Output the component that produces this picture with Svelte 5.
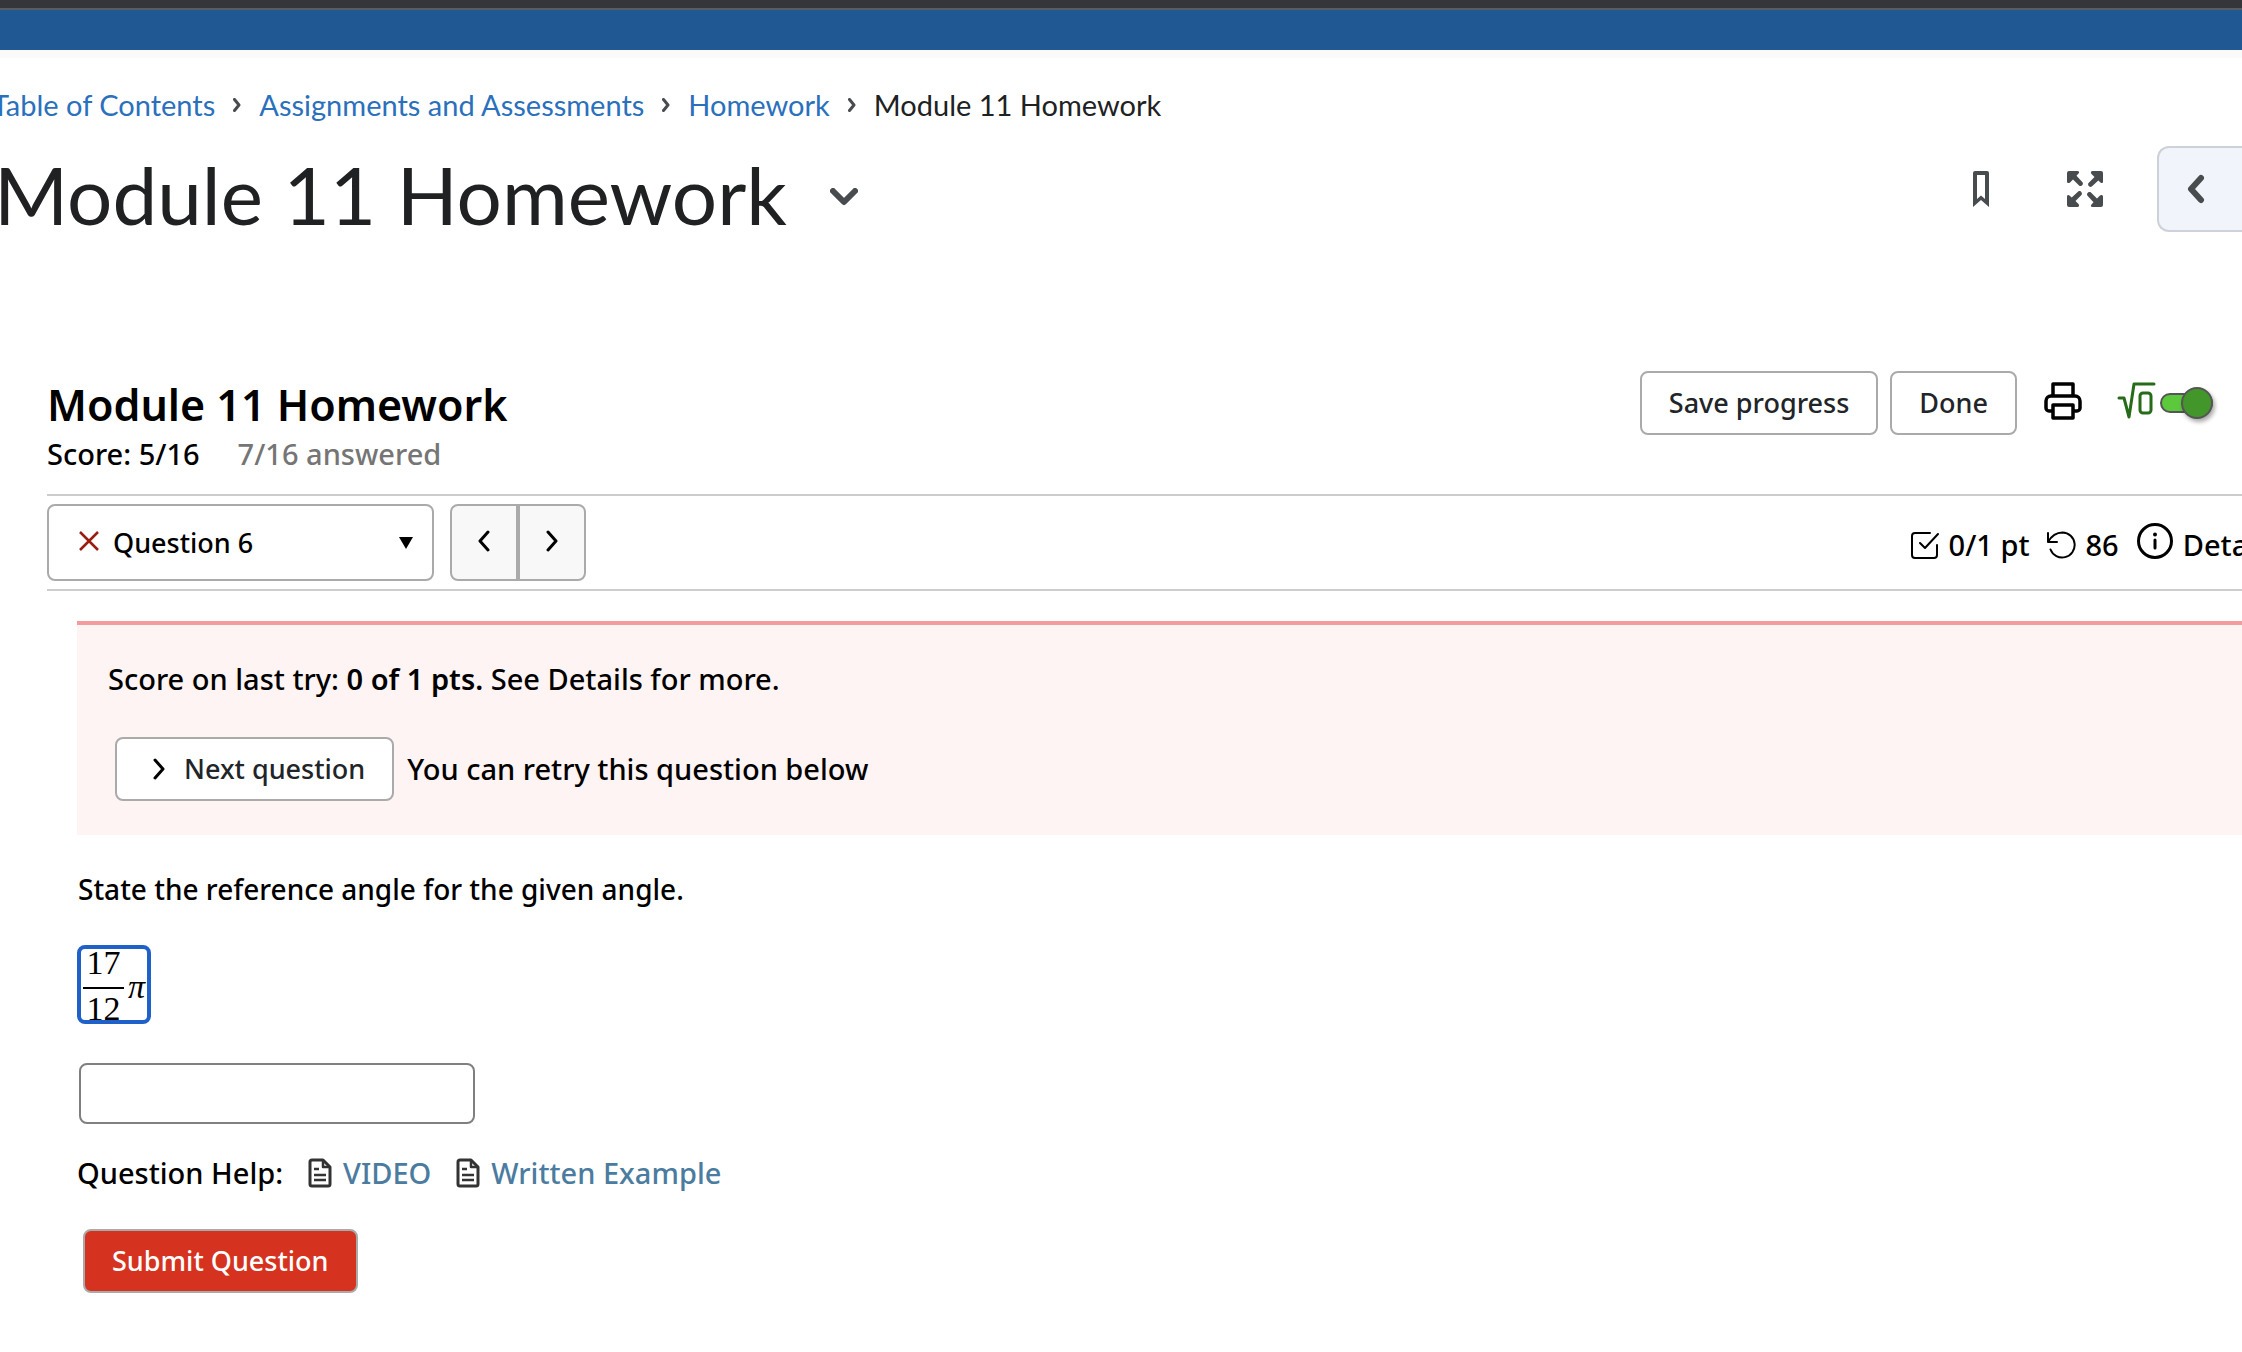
<script>
  const crumbs = ['Table of Contents', 'Assignments and Assessments', 'Homework'];
  const resources = ['VIDEO', 'Written Example'];
  let question = $state('Question 6');
  let answer = $state('');
  let mathEntry = $state(true);
</script>

{#snippet chevron(dir)}
  <svg class="chev" width="14" height="22" viewBox="0 0 14 22" aria-hidden="true">
    <path d={dir === 'left' ? 'M11 2 3 11l8 9' : 'M3 2 11 11l-8 9'} />
  </svg>
{/snippet}

<div class="page">
  <div class="window-edge"></div>
  <div class="brand-bar"></div>

  <header class="course">
    <nav class="crumbs" aria-label="Breadcrumb">
      {#each crumbs as crumb}
        <a href="#top">{crumb}</a>
        <svg width="8" height="14" viewBox="0 0 8 14" aria-hidden="true"><path d="M1.500 1.500 6 7l-4.500 5.500" /></svg>
      {/each}
      <span>Module 11 Homework</span>
    </nav>
    <div class="title-row">
      <h1>Module 11 Homework</h1>
      <button class="plain topic" aria-label="Topic actions">
        <svg width="28" height="18" viewBox="0 0 28 18"><path class="thick" d="M3 3 14 14 25 3" /></svg>
      </button>
      <div class="tools">
        <button class="plain" aria-label="Bookmark">
          <svg width="16" height="36" viewBox="0 0 16 36"><path fill="#494c4e" fill-rule="evenodd" d="M2 0h12a2 2 0 0 1 2 2v34l-8-7-8 7V2a2 2 0 0 1 2-2Zm2 4v24l4-3.500 4 3.500V4Z" /></svg>
        </button>
        <button class="plain" aria-label="Full screen">
          <svg width="36" height="36" viewBox="0 0 36 36">
            {#each [0, 90, 180, 270] as angle}
              <g transform="rotate({angle} 18 18)">
                <path fill="#494c4e" d="M2 0h8.500c1.800 0 2 1.500 1 2.500L9.500 4.700l6 6.500c1.500 2-1 4.500-3.200 3.500L6 8.500 3 11.500C1.800 12.700 0 12 0 10.500V2a2 2 0 0 1 2-2Z" />
              </g>
            {/each}
          </svg>
        </button>
        <button class="panel" aria-label="Open side panel">
          <svg width="18" height="30" viewBox="0 0 18 30"><path class="thick" d="M14 4 4 15 14 26" /></svg>
        </button>
      </div>
    </div>
  </header>

  <main>
    <div class="heading">
      <div>
        <h2>Module 11 Homework</h2>
        <p class="score"><span>Score: 5/16</span><span class="muted">7/16 answered</span></p>
      </div>
      <div class="actions">
        <button class="btn">Save progress</button>
        <button class="btn">Done</button>
        <button class="plain print" aria-label="Print">
          <svg width="38" height="38" viewBox="0 0 38 38" fill="none" stroke="#000" stroke-width="3.500" stroke-linejoin="round">
            <path d="M9 14V2h20v12M9 29H5a3 3 0 0 1-3-3v-7a5 5 0 0 1 5-5h24a5 5 0 0 1 5 5v7a3 3 0 0 1-3 3h-4M9 23h20v13H9Z" />
          </svg>
        </button>
        <label class="switch">
          <svg width="39" height="38" viewBox="0 0 39 38" fill="none" stroke="#256b18" stroke-width="3" stroke-linecap="round" stroke-linejoin="round" aria-hidden="true">
            <path d="M2 16h5l5 19 5-33h20" /><rect x="23" y="11" width="11" height="20" rx="3" />
          </svg>
          <input type="checkbox" aria-label="Equation editor" bind:checked={mathEntry} />
          <span class="track"><span class="knob"></span></span>
        </label>
      </div>
    </div>

    <div class="question-bar">
      <div class="picker">
        <svg width="20" height="20" viewBox="0 0 20 20" aria-hidden="true"><path d="m1 1 18 18M19 1 1 19" stroke="#9b1c10" stroke-width="2.500" /></svg>
        <select aria-label="Question" bind:value={question}>
          <option>Question 6</option>
        </select>
        <svg class="caret" width="16" height="12" viewBox="0 0 16 12" aria-hidden="true"><path d="M1 0h14L8 12Z" /></svg>
      </div>
      <div class="pager">
        <button aria-label="Previous question">{@render chevron('left')}</button>
        <button aria-label="Next question">{@render chevron('right')}</button>
      </div>
      <div class="status">
        <svg width="28" height="28" viewBox="0 0 28 28" class="line" aria-hidden="true"><path d="M19 2H4a3 3 0 0 0-3 3v19a3 3 0 0 0 3 3h19a3 3 0 0 0 3-3V14M9 12l5 5L27 3" /></svg>
        <span class="points">0/1 pt</span>
        <svg width="30" height="28" viewBox="0 0 30 28" class="line" aria-hidden="true"><path d="M2 2v9h9M2 11C6 4 11 1.500 16.500 1.500a12.500 12.500 0 1 1-12 17" /></svg>
        <span class="tries">86</span>
        <svg class="info" width="36" height="36" viewBox="0 0 36 36" aria-hidden="true"><circle cx="18" cy="18" r="16.500" fill="none" stroke="#000" stroke-width="3" /><path d="M18 17v8" stroke="#000" stroke-width="3" stroke-linecap="round" /><circle cx="18" cy="11.500" r="2" /></svg>
        <a class="details" href="#details">Details</a>
      </div>
    </div>

    <section class="question">
      <div class="feedback">
        <p>Score on last try: <strong>0 of 1 pts.</strong> See Details for more.</p>
        <div class="retry">
          <button class="btn next">{@render chevron('right')}Next question</button>
          <span>You can retry this question below</span>
        </div>
      </div>

      <p class="prompt">State the reference angle for the given angle.</p>
      <div class="math" role="math" aria-label="17 twelfths pi">
        <span class="frac"><span class="num">17</span><span class="den">12</span></span><i>π</i>
      </div>
      <input class="answer" type="text" aria-label="Answer" bind:value={answer} />

      <p class="help">
        <span>Question Help:</span>
        {#each resources as name}
          <a href="#help">
            <svg width="24" height="30" viewBox="0 0 24 30" fill="none" stroke="#333" stroke-width="3" stroke-linejoin="round" aria-hidden="true"><path d="M4 2h11l7 7v17a2 2 0 0 1-2 2H4a2 2 0 0 1-2-2V4a2 2 0 0 1 2-2Z" /><path d="M15 2v7h7M6 11h5M6 17h12M6 22h12" stroke-width="2.500" /></svg>
            {name}
          </a>
        {/each}
      </p>
      <button class="btn submit">Submit Question</button>
    </section>
  </main>
</div>

<style>
  :global(body) {
    margin: 0;
    background: #fff;
    overflow-x: hidden;
  }
  .page {
    overflow: hidden;
    font: 500 29px/40px 'Noto Sans', 'Open Sans', sans-serif;
    color: #000;
  }
  h1, h2, p { margin: 0; }
  a { text-decoration: none; }
  svg { display: block; flex: none; }
  button, input, select { font: inherit; color: inherit; box-sizing: border-box; }
  button { cursor: pointer; }
  .plain { padding: 0; border: 0; background: none; }
  .thick { fill: none; stroke: #494c4e; stroke-width: 6; stroke-linecap: round; stroke-linejoin: round; }
  .chev path, .line { fill: none; stroke: #000; stroke-width: 2; stroke-linecap: round; stroke-linejoin: round; }
  .chev path { stroke-width: 3; }

  .window-edge { height: 8px; background: #35363a; border-bottom: 2px solid #5b5c60; }
  .brand-bar { height: 40px; background: #1f5892; border-bottom: 8px solid #fafafa; }

  .course { font-family: Lato, sans-serif; font-weight: 400; color: #202122; }
  .crumbs { display: flex; align-items: center; margin: 27px 0 0 -8px; white-space: nowrap; }
  .crumbs a { color: #2a70bc; }
  .crumbs svg { margin: 0 18px; }
  .crumbs path { fill: none; stroke: #494c4e; stroke-width: 3; stroke-linecap: round; stroke-linejoin: round; }
  .title-row { display: flex; align-items: flex-start; height: 96px; margin-top: 21px; }
  h1 { margin: 0 43px 0 -6px; font-size: 80px; line-height: 96px; font-weight: 400; white-space: nowrap; }
  .topic { align-self: center; padding-top: 6px; }
  .tools { display: flex; align-items: center; gap: 78px; margin-left: auto; }
  .panel {
    width: 85px; height: 86px; margin-left: -24px; padding: 0 0 0 28px;
    border: 2px solid #cdd2d9; border-right: 0; border-radius: 12px 0 0 12px; background: #f1f4fb;
  }

  main { margin: 129px 0 0 47px; }
  .heading { display: flex; justify-content: space-between; align-items: flex-start; padding-bottom: 21px; }
  h2 { padding-top: 4px; font-size: 43px; line-height: 60px; font-weight: 600; }
  .score { display: flex; gap: 38px; line-height: 38px; }
  .muted { color: #757575; }
  .actions { display: flex; align-items: center; gap: 12px; margin-right: 29px; }
  .btn {
    height: 64px; padding: 0 27px; border: 2px solid #aaa; border-radius: 8px;
    background: #fff; color: #212529; font-size: 27px; white-space: nowrap;
  }
  .print { margin: 0 0 5px 15px; }
  .switch { position: relative; display: flex; align-items: center; gap: 4px; margin-left: 23px; }
  .switch svg { margin-bottom: 5px; }
  .switch input { position: absolute; inset: 0; width: 100%; height: 100%; margin: 0; opacity: 0; }
  .track {
    display: flex; align-items: center; justify-content: flex-end; box-sizing: border-box;
    width: 53px; height: 20px; border: 2px solid #555; border-radius: 10px; background: #5cc83b;
  }
  .knob {
    flex: none; box-sizing: border-box; width: 32px; height: 32px; margin-right: -2px;
    border: 2px solid #555; border-radius: 50%; background: #43962a; box-shadow: 2px 3px 4px #0005;
  }

  .question-bar {
    display: flex; align-items: center; height: 93px;
    border-top: 2px solid #ccc; border-bottom: 2px solid #ccc;
  }
  .picker { display: grid; align-items: center; width: 387px; }
  .picker > * { grid-area: 1 / 1; }
  .picker svg { z-index: 1; margin: 0 0 4px 32px; pointer-events: none; }
  .picker .caret { justify-self: end; margin: 0 20px 0 0; }
  select {
    width: 100%; height: 77px; padding: 0 40px 0 64px; appearance: none; font-size: 27px;
    border: 2px solid #aaa; border-radius: 8px; background: #fff;
  }
  .pager { display: flex; margin-left: 16px; }
  .pager button {
    display: grid; place-items: center; width: 68px; height: 77px; padding: 0 0 4px;
    border: 2px solid #aaa; border-radius: 8px 0 0 8px; background: #f8f8f8;
  }
  .pager button + button { border-radius: 0 8px 8px 0; }
  .status { display: flex; align-items: center; margin: 4px -36px 0 auto; white-space: nowrap; }
  .points { margin: 0 16px 0 10px; }
  .tries { margin: 0 18px 0 10px; }
  .info { margin-bottom: 8px; }
  .details { margin-left: 10px; color: #000; }

  .question { padding: 30px 0 0 30px; }
  .feedback { height: 214px; box-sizing: border-box; padding: 34px 31px 0; border-top: 4px solid #f49c9c; background: #fef4f3; }
  strong { font-weight: 600; }
  .retry { display: flex; align-items: center; gap: 13px; margin: 38px 0 0 7px; }
  .next { display: flex; align-items: center; gap: 18px; padding: 0 27px 0 35px; }
  .prompt { margin: 34px 0 0 1px; font-size: 28px; }
  .math {
    display: flex; align-items: center; box-sizing: border-box; width: 74px; height: 79px; margin-top: 36px;
    padding: 0 0 0 2px; border: 4px solid #1f61c9; border-radius: 8px;
    font: 400 34px/46px 'Liberation Serif', serif;
  }
  .frac { display: grid; width: 41px; text-align: center; }
  .num { height: 45px; line-height: 42px; }
  .den { height: 38px; line-height: 40px; border-top: 2px solid #000; }
  .math i { margin: 4px 0 0 4px; }
  .answer {
    display: block; width: 396px; height: 61px; margin: 39px 0 0 2px; padding: 0 12px;
    border: 2px solid #808080; border-radius: 8px; background: #fff;
  }
  .help { display: flex; gap: 25px; margin-top: 29px; }
  .help a { display: flex; align-items: center; gap: 11px; color: #4b7c9f; }
  .submit { margin: 36px 0 0 6px; background: #d5321f; color: #fff; }
</style>
